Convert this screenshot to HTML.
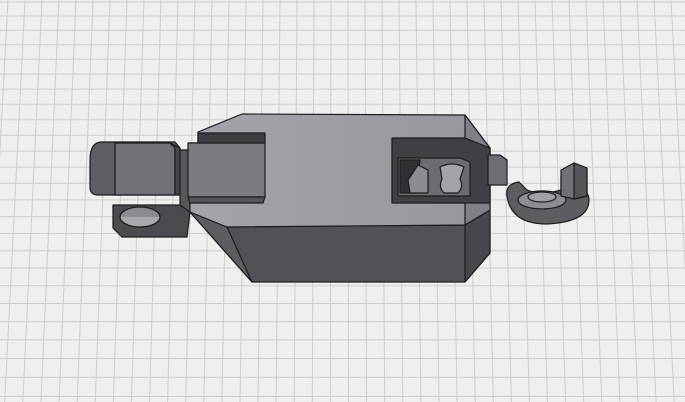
<!DOCTYPE html>
<html><head><meta charset="utf-8"><style>
html,body{margin:0;padding:0;width:685px;height:402px;overflow:hidden;background:#efefef}
svg{display:block}
</style></head><body>
<svg id="s" width="685" height="402" viewBox="0 0 685 402" xmlns="http://www.w3.org/2000/svg">
<defs>
<linearGradient id="tg" x1="0" y1="0" x2="1" y2="0"><stop offset="0" stop-color="#a3a4a9"/><stop offset="1" stop-color="#96979c"/></linearGradient>
</defs>
<rect width="685" height="402" fill="#efefef"/>
<g id="grid" stroke="#cdcdcd" stroke-width="1"></g>
<g stroke="#1c1c1e" stroke-width="1.2" stroke-linejoin="round">
<polygon points="113,205 187,205 190,212 187,237 122,237 113,228" fill="#4a4b4f"/>
<ellipse cx="140" cy="217" rx="20" ry="10" fill="#8a8b90"/>
<path d="M120,217 a20,10 0 0 0 40,0" fill="#a8a9ad"/>
<path d="M90,160 q0,-18 12,-18 h73 l5,6 v47 h-82 q-8,0 -8,-8z" fill="#5d5e62"/>
<polygon points="115,143 170,143 175,148 175,195 115,195" fill="#717277"/>
<polygon points="170,143 180,148 180,195 175,195 175,148" fill="#45464a"/>
<polygon points="180,150 190,150 190,212 180,205" fill="#56575b"/>
<polygon points="190,212 227,227 465,225 490,210 490,253 465,282 252,282" fill="#515256"/>
<polygon points="190,212 227,227 252,282" fill="#5c5d61"/>
<polygon points="465,225 490,210 490,253 465,282" fill="#46474b"/>
<polygon points="198,132 242,114 465,115 490,148 490,210 465,225 227,227 190,212 190,143 198,143" fill="url(#tg)"/>
<polygon points="465,115 490,148 490,210 465,225" fill="#808186"/>
<polygon points="198,133 265,133 265,143 198,143" fill="#3d3e42"/>
<polygon points="188,143 265,143 265,197 188,197" fill="#7b7c81"/>
<polygon points="188,197 265,197 263,203 190,203" fill="#55565a"/>
<polygon points="392,138 465,138 490,148 490,203 392,203" fill="#3f4044"/>
<polygon points="398,158 460,158 470,162 470,196 398,196" fill="#6b6c71"/>
<polygon points="400,160 420,160 415,193 400,193" fill="#2f3033"/>
<polygon points="408,180 418,165 428,170 428,193 410,193" fill="#8c8d92"/>
<path d="M440,167 q12,-6 24,0 l-4,12 q4,8 -2,14 h-14 q-6,-6 -2,-14z" fill="#a3a4a9"/>
<polygon points="488,155 500,155 507,160 507,185 488,185" fill="#6d6e73"/>
<path d="M507,196 q-2,-12 12,-14 l8,8 q14,6 34,0 l0,-14 l14,0 l0,8 q14,6 14,16 q0,22 -42,24 q-36,0 -40,-28z" fill="#5c5d61"/>
<ellipse cx="542" cy="200" rx="24" ry="9" fill="#8d8e93"/>
<ellipse cx="542" cy="197" rx="14" ry="5" fill="#a1a2a7"/>
<polygon points="561,170 574,163 587,168 587,196 574,199 561,196" fill="#707176"/>
<polygon points="574,163 587,168 587,196 574,199" fill="#55565a"/>
</g>
</svg>
<script>
var g=document.getElementById('grid'),h='';
var y=2;while(y<402){h+='<line x1="0" y1="'+y.toFixed(1)+'" x2="685" y2="'+y.toFixed(1)+'"/>';y+=14+y*0.0135;}
for(var x0=-60;x0<760;x0+=17){var xb=x0+(x0-340)*402*0.00016;h+='<line x1="'+x0+'" y1="0" x2="'+xb.toFixed(1)+'" y2="402"/>';}
g.innerHTML=h;
</script>
</body></html>
